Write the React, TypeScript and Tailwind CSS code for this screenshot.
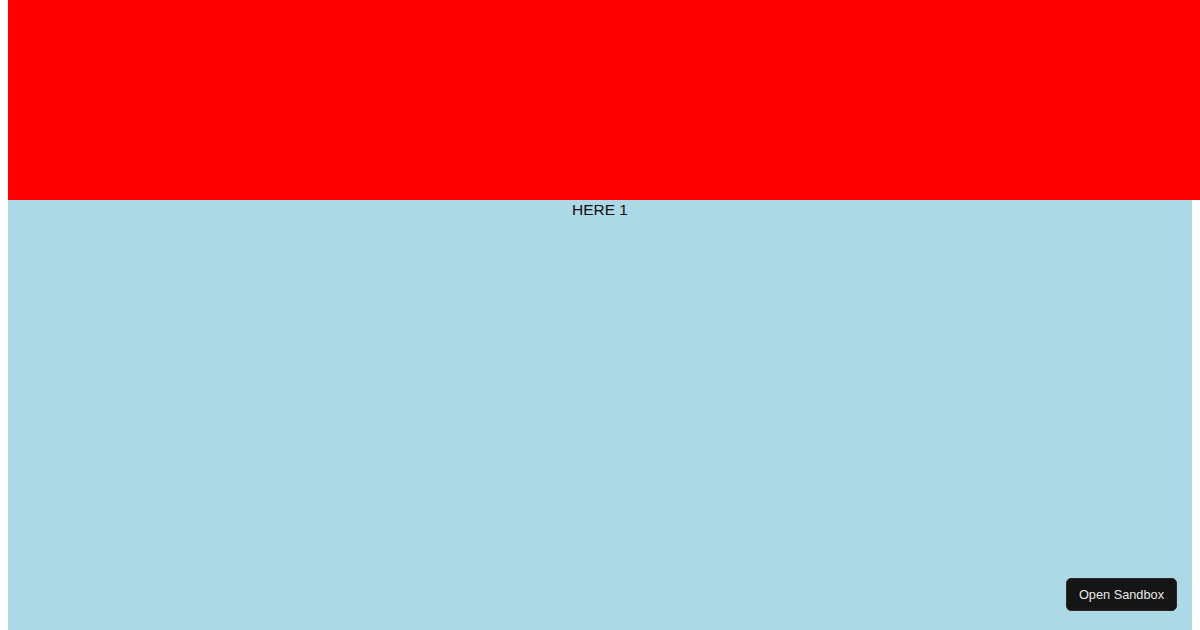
import React from "react";

// Simple sandbox preview: red header band, light-blue body with a label,
// and the floating "Open Sandbox" button in the corner.
const App = () => {
    return (
        <div className="relative h-[630px] w-[1200px] overflow-hidden bg-white pl-2 font-['Liberation_Sans',Arial,sans-serif]">
            <div className="h-[200px] w-[1192px] bg-[#ff0000]" />
            <div className="h-[430px] w-[1184px] bg-[#add8e6] pt-px text-center text-[15.5px] leading-[18px] text-[#111]">
                HERE 1
            </div>

            <button className="absolute bottom-[19px] right-[23px] h-[33px] w-[111px] rounded-[5px] border border-[#2a2a2a] bg-[#151515] text-[12.75px] text-[#e8e8e8]">
                Open Sandbox
            </button>
        </div>
    );
};

export default App;
